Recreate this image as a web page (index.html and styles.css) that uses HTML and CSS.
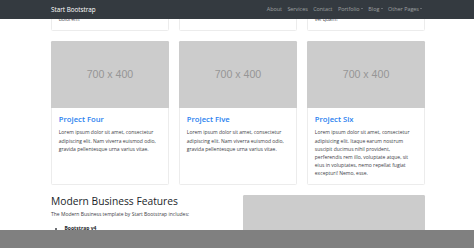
FILE: index.html
```html
<!DOCTYPE html>
<html lang="en">
<head>
<meta charset="utf-8">
<title>Modern Business - Start Bootstrap</title>
<link rel="stylesheet" href="styles.css">
</head>
<body>
<nav class="navbar">
  <div class="container nav-inner">
    <a class="brand" href="#">Start Bootstrap</a>
    <ul class="nav-links">
      <li><a href="#">About</a></li>
      <li><a href="#">Services</a></li>
      <li><a href="#">Contact</a></li>
      <li><a class="dropdown" href="#">Portfolio</a></li>
      <li><a class="dropdown" href="#">Blog</a></li>
      <li><a class="dropdown" href="#">Other Pages</a></li>
    </ul>
  </div>
</nav>

<main class="container">
  <div class="scrolled-away">
    <div class="cards-row">
      <div class="card">
        <div class="ph">700 x 400</div>
        <div class="card-body">
          <h4 class="card-title">Project One</h4>
          <p class="card-text">Lorem ipsum dolor sit amet, consectetur adipisicing elit. Amet numquam aspernatur eum quasi sapiente nesciunt? Voluptatibus sit, repellat sequi itaque deserunt, dolores in, nesciunt, illum tempora ex quae? Nihil, dolorem!</p>
        </div>
      </div>
      <div class="card">
        <div class="ph">700 x 400</div>
        <div class="card-body">
          <h4 class="card-title">Project Two</h4>
          <p class="card-text">Lorem ipsum dolor sit amet, consectetur adipiscing elit. Nam viverra euismod odio, gravida pellentesque urna varius vitae.</p>
        </div>
      </div>
      <div class="card">
        <div class="ph">700 x 400</div>
        <div class="card-body">
          <h4 class="card-title">Project Three</h4>
          <p class="card-text">Lorem ipsum dolor sit amet, consectetur adipisicing elit. Quos quisquam, error quod sed cumque, odio distinctio velit nostrum temporibus necessitatibus et facere atque iure perspiciatis mollitia recusandae vero vel quam!</p>
        </div>
      </div>
    </div>
  </div>

  <div class="cards-row portfolio">
    <div class="card">
      <div class="ph">700 x 400</div>
      <div class="card-body">
        <h4 class="card-title"><a href="#">Project Four</a></h4>
        <p class="card-text">Lorem ipsum dolor sit amet, consectetur adipiscing elit. Nam viverra euismod odio, gravida pellentesque urna varius vitae.</p>
      </div>
    </div>
    <div class="card">
      <div class="ph">700 x 400</div>
      <div class="card-body">
        <h4 class="card-title"><a href="#">Project Five</a></h4>
        <p class="card-text">Lorem ipsum dolor sit amet, consectetur adipiscing elit. Nam viverra euismod odio, gravida pellentesque urna varius vitae.</p>
      </div>
    </div>
    <div class="card">
      <div class="ph">700 x 400</div>
      <div class="card-body">
        <h4 class="card-title"><a href="#">Project Six</a></h4>
        <p class="card-text">Lorem ipsum dolor sit amet, consectetur adipisicing elit. Itaque earum nostrum suscipit ducimus nihil provident, perferendis rem illo, voluptate atque, sit eius in voluptates, nemo repellat fugiat excepturi! Nemo, esse.</p>
      </div>
    </div>
  </div>

  <section class="features">
    <div class="features-text">
      <h2>Modern Business Features</h2>
      <p>The Modern Business template by Start Bootstrap includes:</p>
      <ul>
        <li><strong>Bootstrap v4</strong></li>
        <li>jQuery</li>
        <li>Font Awesome</li>
        <li>Working contact form with validation</li>
        <li>Unstyled page elements for easy customization</li>
      </ul>
    </div>
    <div class="features-img"></div>
  </section>
</main>

<div class="bottom-bar"></div>
</body>
</html>
```

FILE: styles.css
```css
* { box-sizing: border-box; }

html, body {
  margin: 0;
  padding: 0;
  background: #fff;
}

body {
  font-family: "Open Sans", "Noto Sans", sans-serif;
  font-size: 5px;
  line-height: 8.1px;
  color: #3d4146;
  overflow: hidden;
}

a { text-decoration: none; }

.container {
  width: 374px;
  margin-left: calc(50% - 186px);
}

/* navbar */
.navbar {
  position: fixed;
  top: 0;
  left: 0;
  right: 0;
  height: 19px;
  background: #343a40;
  z-index: 10;
}

.nav-inner {
  height: 100%;
  display: flex;
  align-items: center;
  justify-content: space-between;
}

.brand {
  color: #fff;
  font-size: 6.3px;
  line-height: 9px;
}

.nav-links {
  list-style: none;
  margin: 0;
  padding: 0;
  display: flex;
}

.nav-links a {
  display: block;
  padding: 0 2.7px;
  color: rgba(255, 255, 255, 0.5);
  font-size: 5.4px;
  line-height: 9px;
  white-space: nowrap;
}

.dropdown::after {
  content: "";
  display: inline-block;
  margin-left: 1.4px;
  vertical-align: 0.3em;
  border-top: 1.6px solid;
  border-left: 1.6px solid transparent;
  border-right: 1.6px solid transparent;
}

/* previous row scrolled under the navbar */
.scrolled-away {
  height: 31px;
  overflow: hidden;
  display: flex;
  flex-direction: column;
  justify-content: flex-end;
}

.cards-row {
  display: grid;
  grid-template-columns: repeat(3, 1fr);
  column-gap: 10.1px;
}

.portfolio { margin-top: 10px; }

.card {
  border: 1px solid #ececec;
  border-radius: 1.4px;
  display: flex;
  flex-direction: column;
  background: #fff;
}

.ph {
  height: 67px;
  background: #ccc;
  color: #969696;
  font-family: "Liberation Sans", Arial, sans-serif;
  font-size: 10.6px;
  display: flex;
  align-items: center;
  justify-content: center;
  border-radius: 1.4px 1.4px 0 0;
  margin: -1px -1px 0;
}

.card-body {
  padding: 6.75px;
  flex: 1;
}

.card-title {
  margin: 0 0 4px;
  font-size: 7.7px;
  line-height: 9.7px;
  font-weight: 600;
}

.card-title a { color: #2a7ff0; }

.card-text { margin: 0; }

/* features */
.features {
  margin-top: 10px;
  display: grid;
  grid-template-columns: 1fr 1fr;
  column-gap: 10.1px;
}

.features h2 {
  margin: 0 0 2.7px;
  font-size: 10.25px;
  line-height: 13px;
  font-weight: 500;
  color: #212529;
}

.features p { margin: 0 0 5.4px; }

.features ul {
  margin: 0;
  padding-left: 13.5px;
}

.features strong { color: #212529; }

.features-img {
  height: 117px;
  background: #ccc;
  border-radius: 1.4px;
}

.bottom-bar {
  position: fixed;
  left: 0;
  right: 0;
  bottom: 0;
  height: 18px;
  background: #808080;
  z-index: 20;
}
```
